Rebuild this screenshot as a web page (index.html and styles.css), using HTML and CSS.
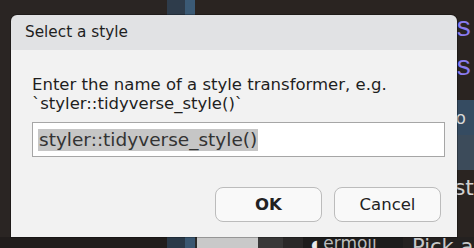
FILE: index.html
```html
<!DOCTYPE html>
<html>
<head>
<meta charset="utf-8">
<link rel="stylesheet" href="styles.css">
</head>
<body>
<div class="screen">
  <div class="backdrop">
    <div class="pane-left"></div>
    <div class="gutter-a"></div>
    <div class="gutter-b"></div>
    <div class="editor">
      <div class="code-line">dal_sourcetes</div>
      <div class="code-line">s</div>
      <div class="hl-row one"><span class="hl-text">o</span></div>
      <div class="hl-row two"></div>
      <div class="plain-line">st</div>
    </div>
    <div class="foot-left"></div>
    <div class="foot-ga"></div>
    <div class="foot-gb"></div>
    <div class="foot-editor">
      <span class="seg gap"></span>
      <span class="seg light"></span>
      <span class="seg mid"></span>
      <span class="seg dark2"></span>
      <span class="seg files"><span class="pkg-icon">&#x25D6;</span> ermoji</span>
      <span class="seg pick">Pick a</span>
    </div>
  </div>

  <div class="dialog">
    <div class="dialog-title">Select a style</div>
    <div class="dialog-body">
      <div class="prompt">Enter the name of a style transformer, e.g.<br>`styler::tidyverse_style()`</div>
      <div class="field"><span class="selected">styler::tidyverse_style()</span></div>
      <div class="actions">
        <button class="btn primary">OK</button>
        <button class="btn">Cancel</button>
      </div>
    </div>
  </div>
</div>
</body>
</html>
```

FILE: styles.css
```css
html, body {
  margin: 0;
  padding: 0;
}
body {
  width: 474px;
  height: 248px;
  overflow: hidden;
  background: #2a2523;
  font-family: "DejaVu Sans", sans-serif;
}
.screen {
  position: relative;
  width: 474px;
  height: 248px;
}
.backdrop {
  display: grid;
  grid-template-columns: 167px 18px 10px 1fr;
  grid-template-rows: 237px 11px;
  height: 248px;
}
.pane-left {
  background: #2a2523;
}
.gutter-a {
  background: #2e3c4b;
}
.gutter-b {
  background: #3b5a75;
}
.editor {
  background: #2a2421;
  display: flex;
  flex-direction: column;
  overflow: hidden;
  padding-top: 9px;
}
.code-line {
  font-family: "Liberation Mono", monospace;
  font-size: 28px;
  line-height: 39px;
  height: 39px;
  color: #8a7cf0;
  text-align: right;
  padding-right: 2px;
  white-space: nowrap;
}
.hl-row {
  display: flex;
  justify-content: flex-end;
  align-items: center;
}
.hl-row.one {
  margin-top: 13px;
  height: 35px;
  background: #354b61;
}
.hl-row.two {
  height: 35px;
  background: #3c4b5a;
}
.hl-text {
  color: #d8d8d8;
  font-size: 17px;
  padding-right: 8px;
}
.plain-line {
  margin-top: 3px;
  color: #d0d0d0;
  font-size: 22px;
  line-height: 30px;
  text-align: right;
  white-space: nowrap;
}
.foot-left {
  background: #211d1c;
}
.foot-ga {
  background: #2a3948;
}
.foot-gb {
  background: #3a5771;
}
.foot-editor {
  display: flex;
  background: #242120;
  overflow: hidden;
  white-space: nowrap;
}
.seg {
  display: block;
  height: 11px;
}
.seg.gap { width: 2px; background: #2b2b2b; }
.seg.light { width: 61px; background: #c9c9c9; }
.seg.mid { width: 25px; background: #393838; }
.seg.dark2 { width: 20px; background: #2a2828; }
.seg.files {
  width: 100px;
  background: #1d1c1c;
  color: #bcbcbc;
  font-size: 17px;
  line-height: 13px;
  padding-left: 8px;
  box-sizing: border-box;
  overflow: hidden;
}
.pkg-icon {
  color: #e8e8e8;
  font-size: 13px;
}
.seg.pick {
  flex: 1;
  color: #c8c8c8;
  font-size: 21px;
  line-height: 20px;
  padding-left: 9px;
  overflow: hidden;
}

.dialog {
  position: absolute;
  left: 11px;
  top: 15px;
  width: 446px;
  height: 222px;
  display: flex;
  flex-direction: column;
  border-radius: 6px 6px 0 0;
  overflow: hidden;
  box-shadow: 0 0 0 1px rgba(0,0,0,0.25);
}
.dialog-title {
  height: 35px;
  line-height: 35px;
  flex: none;
  background: #e1e2e4;
  color: #1e1e1e;
  font-size: 15.3px;
  padding-left: 14px;
}
.dialog-body {
  flex: 1;
  background: #f2f2f2;
  padding: 25px 12px 15px 21px;
  display: flex;
  flex-direction: column;
}
.prompt {
  font-size: 16.5px;
  line-height: 19px;
  color: #1e1e1e;
}
.field {
  margin-top: 9px;
  height: 35px;
  box-sizing: border-box;
  border: 1px solid #a6a6a6;
  background: #ffffff;
  padding-left: 5px;
  display: flex;
  align-items: center;
}
.selected {
  background: #c6c6c6;
  color: #333333;
  font-size: 18.5px;
  line-height: 22px;
  padding: 0 1px;
}
.actions {
  margin-top: 30px;
  display: flex;
  justify-content: flex-end;
  gap: 12px;
  padding-right: 4px;
}
.btn {
  width: 107px;
  height: 35px;
  border: 1px solid #bcbcbc;
  border-radius: 8px;
  background: #f9f9f9;
  color: #222222;
  font-family: "DejaVu Sans", sans-serif;
  font-size: 16.5px;
  padding: 0;
}
.btn.primary {
  font-weight: bold;
}
```
